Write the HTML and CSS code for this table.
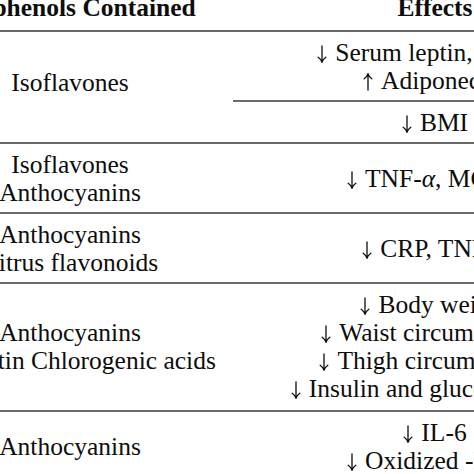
FILE: index.html
```html
<!DOCTYPE html>
<html lang="en">
<head>
<meta charset="utf-8">
<title>Polyphenols table</title>
<link rel="stylesheet" href="styles.css">
</head>
<body>
<div class="viewport">
<table class="tbl">
  <colgroup>
    <col class="c-poly">
    <col class="c-eff">
  </colgroup>
  <thead>
    <tr>
      <th class="hd">Polyphenols Contained</th>
      <th class="hd">Effects</th>
    </tr>
  </thead>
  <tbody>
    <tr>
      <td rowspan="2" class="mr">Isoflavones</td>
      <td><svg class="arr" viewBox="0 0 10 18" aria-label="decrease"><path d="M5 1V17M1.2 12.2Q3.9 14 5 17.4Q6.1 14 8.8 12.2"/></svg>Serum leptin, resistin<br><svg class="arr" viewBox="0 0 10 18" aria-label="increase"><path d="M5 17V1M1.2 5.8Q3.9 4 5 0.6Q6.1 4 8.8 5.8"/></svg>Adiponectin</td>
    </tr>
    <tr>
      <td><svg class="arr" viewBox="0 0 10 18" aria-label="decrease"><path d="M5 1V17M1.2 12.2Q3.9 14 5 17.4Q6.1 14 8.8 12.2"/></svg>BMI</td>
    </tr>
    <tr>
      <td>Isoflavones<br>Anthocyanins</td>
      <td><svg class="arr" viewBox="0 0 10 18" aria-label="decrease"><path d="M5 1V17M1.2 12.2Q3.9 14 5 17.4Q6.1 14 8.8 12.2"/></svg>TNF-<span class="gr">α</span>, MCP-1</td>
    </tr>
    <tr>
      <td>Anthocyanins<br>Citrus flavonoids</td>
      <td><svg class="arr" viewBox="0 0 10 18" aria-label="decrease"><path d="M5 1V17M1.2 12.2Q3.9 14 5 17.4Q6.1 14 8.8 12.2"/></svg>CRP, TNF-<span class="gr">α</span></td>
    </tr>
    <tr class="tall">
      <td>Anthocyanins<br>Quercetin Chlorogenic acids</td>
      <td><svg class="arr" viewBox="0 0 10 18" aria-label="decrease"><path d="M5 1V17M1.2 12.2Q3.9 14 5 17.4Q6.1 14 8.8 12.2"/></svg>Body weight<br><svg class="arr" viewBox="0 0 10 18" aria-label="decrease"><path d="M5 1V17M1.2 12.2Q3.9 14 5 17.4Q6.1 14 8.8 12.2"/></svg>Waist circumference<br><svg class="arr" viewBox="0 0 10 18" aria-label="decrease"><path d="M5 1V17M1.2 12.2Q3.9 14 5 17.4Q6.1 14 8.8 12.2"/></svg>Thigh circumference<br><svg class="arr" viewBox="0 0 10 18" aria-label="decrease"><path d="M5 1V17M1.2 12.2Q3.9 14 5 17.4Q6.1 14 8.8 12.2"/></svg>Insulin and glucose levels,</td>
    </tr>
    <tr>
      <td>Anthocyanins</td>
      <td><svg class="arr" viewBox="0 0 10 18" aria-label="decrease"><path d="M5 1V17M1.2 12.2Q3.9 14 5 17.4Q6.1 14 8.8 12.2"/></svg>IL-6<br><svg class="arr" viewBox="0 0 10 18" aria-label="decrease"><path d="M5 1V17M1.2 12.2Q3.9 14 5 17.4Q6.1 14 8.8 12.2"/></svg>Oxidized -LDL</td>
    </tr>
  </tbody>
</table>
</div>
</body>
</html>
```
FILE: styles.css
```css
html, body {
  margin: 0;
  padding: 0;
  background: #ffffff;
}

.viewport {
  width: 474px;
  height: 474px;
  overflow: hidden;
}

.tbl {
  border-collapse: collapse;
  table-layout: fixed;
  width: 730px;
  margin-top: -12px;
  margin-left: -93px;
  font-family: "Liberation Serif", "Times New Roman", serif;
  font-size: 25.5px;
  line-height: 28px;
  color: #0d0d0d;
}

.c-poly { width: 326px; }
.c-eff { width: 404px; }

.tbl th,
.tbl td {
  padding: 7px 0 5px;
  text-align: center;
  vertical-align: middle;
  border-bottom: 2px solid #6a6a6a;
  white-space: nowrap;
}

.tbl th.hd {
  font-weight: bold;
  padding-top: 6px;
  padding-bottom: 8px;
}

.tbl td.mr {
  vertical-align: top;
  padding-top: 37px;
}

.tbl tr.tall td {
  padding-bottom: 7px;
}

.arr {
  width: 10px;
  height: 18px;
  margin-right: 8px;
  vertical-align: -2px;
  fill: none;
  stroke: #0d0d0d;
  stroke-width: 1.3;
  stroke-linecap: round;
  stroke-linejoin: round;
}

.gr {
  font-style: italic;
}
```
